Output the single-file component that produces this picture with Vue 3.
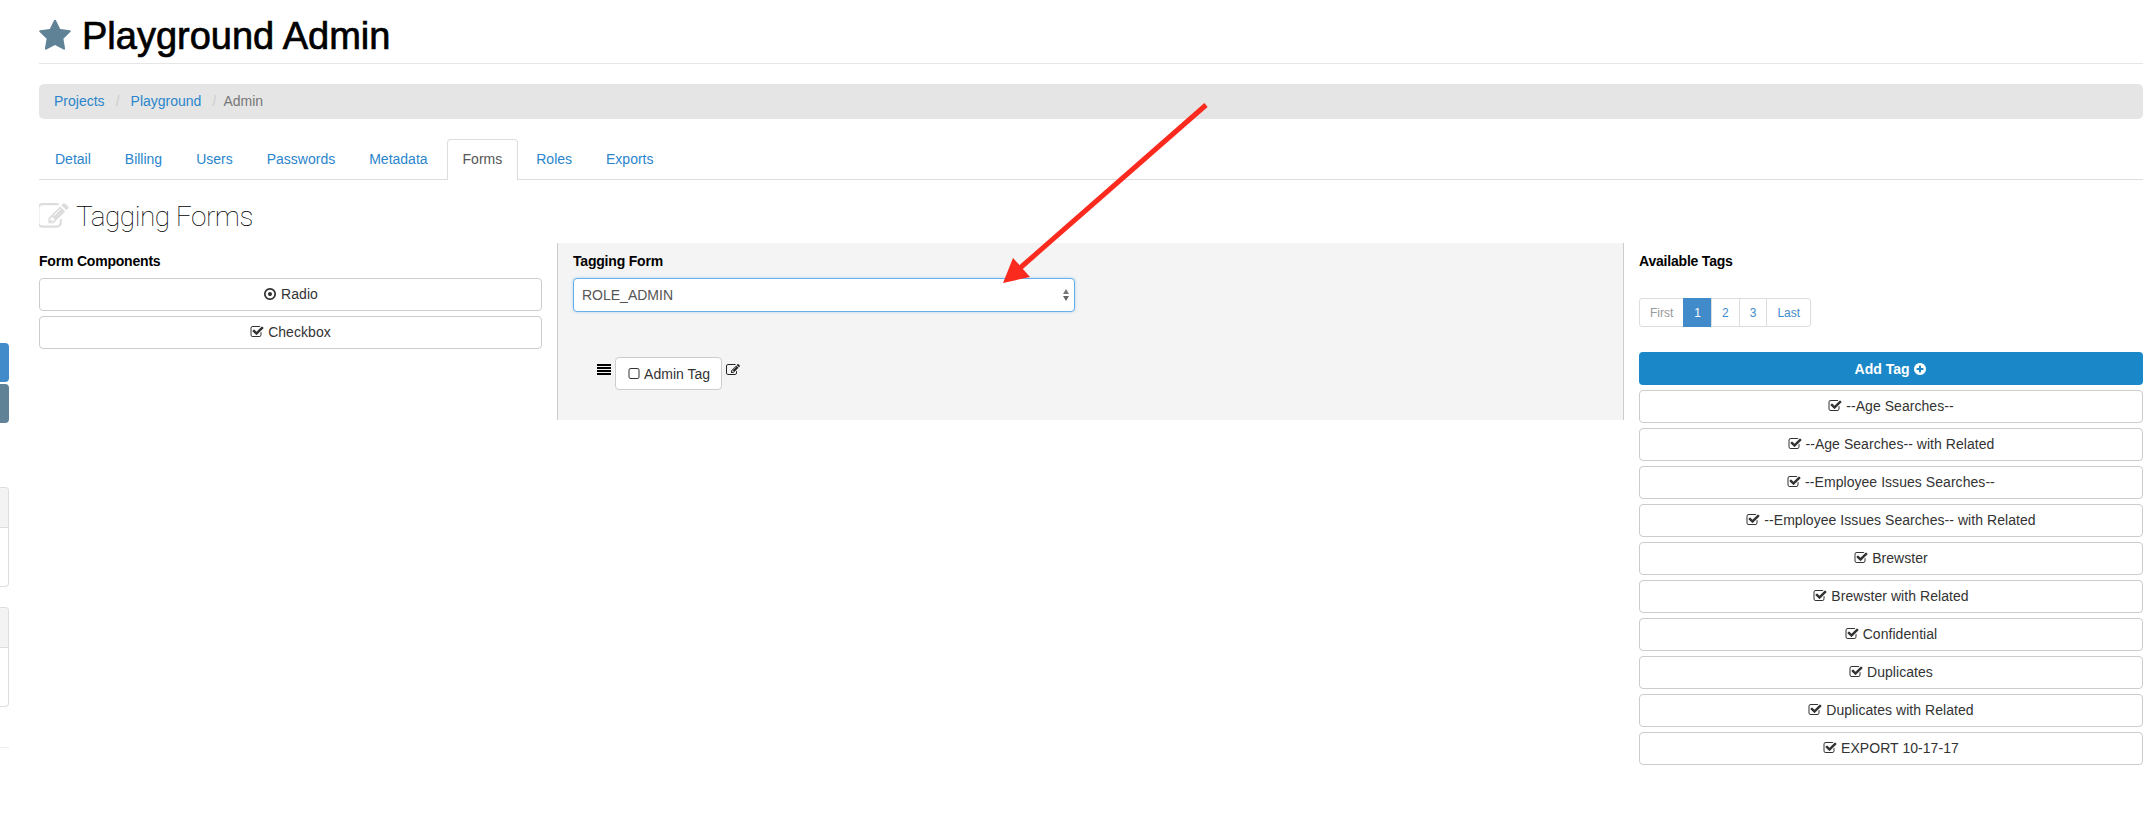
<script setup>
const icons = {
  check: 'M1472 930v318q0 119-84.5 203.5t-203.5 84.5h-832q-119 0-203.5-84.5t-84.5-203.5v-832q0-119 84.5-203.5t203.5-84.5h832q63 0 117 25 15 7 18 23 3 17-9 29l-49 49q-10 10-23 10-3 0-9-2-23-6-45-6h-832q-66 0-113 47t-47 113v832q0 66 47 113t113 47h832q66 0 113-47t47-113v-254q0-13 9-22l64-64q10-10 23-10 6 0 12 3 20 8 20 29zm231-489l-814 814q-24 24-57 24t-57-24l-430-430q-24-24-24-57t24-57l110-110q24-24 57-24t57 24l263 263 647-647q24-24 57-24t57 24l110 110q24 24 24 57t-24 57z',
  edit: 'M888 1184l116-116-152-152-116 116v56h96v96h56zm440-720q-16-16-33 1l-350 350q-17 17-1 33t33-1l350-350q17-17 1-33zm80 594v190q0 119-84.5 203.5t-203.5 84.5h-832q-119 0-203.5-84.5t-84.5-203.5v-832q0-119 84.5-203.5t203.5-84.5h832q63 0 117 25 15 7 18 23 3 16-9 28l-49 49q-14 14-32 8-23-6-45-6h-832q-66 0-113 47t-47 113v832q0 66 47 113t113 47h832q66 0 113-47t47-113v-126q0-13 9-22l64-64q15-15 35-7t20 29zm-96-738l288 288-672 672h-288v-288zm444 132l-92 92-288-288 92-92q28-28 68-28t68 28l152 152q28 28 28 68t-28 68z',
  dot: 'M1152 896q0 106-75 181t-181 75-181-75-75-181 75-181 181-75 181 75 75 181zm-256-544q-148 0-273 73t-198 198-73 273 73 273 198 198 273 73 273-73 198-198 73-273-73-273-198-198-273-73zm768 544q0 209-103 385.5t-279.5 279.5-385.5 103-385.5-103-279.5-279.5-103-385.5 103-385.5 279.5-279.5 385.5-103 385.5 103 279.5 279.5 103 385.5z',
  square: 'M1312 256h-832q-66 0-113 47t-47 113v832q0 66 47 113t113 47h832q66 0 113-47t47-113v-832q0-66-47-113t-113-47zm288 160v832q0 119-84.5 203.5t-203.5 84.5h-832q-119 0-203.5-84.5t-84.5-203.5v-832q0-119 84.5-203.5t203.5-84.5h832q119 0 203.5 84.5t84.5 203.5z',
  plus: 'M1344 960v-128q0-26-19-45t-45-19h-256v-256q0-26-19-45t-45-19h-128q-26 0-45 19t-19 45v256h-256q-26 0-45 19t-19 45v128q0 26 19 45t45 19h256v256q0 26 19 45t45 19h128q26 0 45-19t19-45v-256h256q26 0 45-19t19-45zm320-64q0 209-103 385.5t-279.5 279.5-385.5 103-385.5-103-279.5-279.5-103-385.5 103-385.5 279.5-279.5 385.5-103 385.5 103 279.5 279.5 103 385.5z',
  star: 'M1728 647q0 22-26 48l-363 354 86 500q1 7 1 20 0 21-10.5 35.5t-30.5 14.5q-19 0-40-12l-449-236-449 236q-22 12-40 12-21 0-31.5-14.5t-10.5-35.5q0-6 2-20l86-500-364-354q-25-27-25-48 0-37 56-46l502-73 225-455q19-41 49-41t49 41l225 455 502 73q56 9 56 46z'
}
const tabs = ['Detail', 'Billing', 'Users', 'Passwords', 'Metadata', 'Forms', 'Roles', 'Exports']
const tags = ['--Age Searches--', '--Age Searches-- with Related', '--Employee Issues Searches--', '--Employee Issues Searches-- with Related', 'Brewster', 'Brewster with Related', 'Confidential', 'Duplicates', 'Duplicates with Related', 'EXPORT 10-17-17']
</script>

<template>
  <div class="page">
    <aside class="edge">
      <div class="edge-btn blue"></div>
      <div class="edge-btn slate"></div>
      <div class="edge-panel"><div class="edge-head"></div></div>
      <div class="edge-panel second"><div class="edge-head"></div></div>
      <div class="edge-rule"></div>
    </aside>

    <main class="main">
      <h1 class="title">
        <svg class="star" viewBox="0 100 1792 1600"><path :d="icons.star" /></svg>
        <span>Playground Admin</span>
      </h1>

      <nav class="crumbs">
        <a>Projects</a><span class="sep">/</span><a>Playground</a><span class="sep">/</span><span class="here">Admin</span>
      </nav>

      <ul class="tabs">
        <li v-for="t in tabs" :key="t" :class="{ active: t === 'Forms' }">{{ t }}</li>
      </ul>

      <h2 class="heading">
        <svg class="heading-ic" viewBox="128 128 1664 1536"><path :d="icons.edit" /></svg>
        <span>Tagging Forms</span>
      </h2>

      <div class="columns">
        <section class="col-left">
          <h3 class="label">Form Components</h3>
          <div class="stack">
            <div class="item"><svg class="ic" viewBox="0 0 1792 1792"><path :d="icons.dot" /></svg> Radio</div>
            <div class="item"><svg class="ic" viewBox="0 0 1792 1792"><path :d="icons.check" /></svg> Checkbox</div>
          </div>
        </section>

        <section class="col-mid">
          <h3 class="label">Tagging Form</h3>
          <div class="select-wrap">
            <select class="select"><option>ROLE_ADMIN</option></select>
            <span class="arrows"><i class="up"></i><i class="down"></i></span>
          </div>
          <div class="tag-row">
            <span class="bars"><i></i><i></i><i></i><i></i></span>
            <div class="tag"><svg class="ic" viewBox="0 0 1792 1792"><path :d="icons.square" /></svg> Admin Tag</div>
            <svg class="ic tag-edit" viewBox="0 0 1792 1792"><path :d="icons.edit" /></svg>
          </div>
        </section>

        <section class="col-right">
          <h3 class="label">Available Tags</h3>
          <ul class="pager">
            <li class="off">First</li><li class="on">1</li><li>2</li><li>3</li><li>Last</li>
          </ul>
          <div class="add">Add Tag <svg class="ic" viewBox="0 0 1792 1792"><path :d="icons.plus" /></svg></div>
          <div class="stack">
            <div v-for="t in tags" :key="t" class="item"><svg class="ic" viewBox="0 0 1792 1792"><path :d="icons.check" /></svg> {{ t }}</div>
          </div>
        </section>
      </div>
    </main>

    <svg class="arrow" viewBox="0 0 2151 830" width="2151" height="830">
      <line x1="1206" y1="105" x2="1020" y2="268" stroke="#fb2a1e" stroke-width="5" />
      <polygon points="1003,283 1013,258 1030,277" fill="#fb2a1e" />
    </svg>
  </div>
</template>

<style>
html, body { margin: 0; background: #fff; overflow: hidden; }
</style>

<style scoped>
.page {
  position: relative;
  display: flex;
  width: 2151px;
  height: 830px;
  overflow: hidden;
  font-family: "Liberation Sans", Arial, sans-serif;
  font-size: 14px;
  line-height: 20px;
  color: #333;
}
.edge { width: 9px; padding-top: 343px; flex: none; }
.edge-btn { height: 39px; border-radius: 0 4px 4px 0; margin-bottom: 2px; }
.blue { background: #428bca; }
.slate { background: #5f8296; }
.edge-panel {
  margin-top: 64px;
  height: 100px;
  box-sizing: border-box;
  border: 1px solid #ddd;
  border-left: 0;
  border-radius: 0 4px 4px 0;
}
.edge-panel.second { margin-top: 20px; }
.edge-head { height: 39px; background: #f3f3f3; border-bottom: 1px solid #ddd; border-radius: 0 4px 0 0; }
.edge-rule { margin-top: 40px; height: 1px; background: #eee; }

.main { margin-left: 30px; width: 2104px; flex: none; }
.title {
  display: flex;
  align-items: center;
  gap: 10px;
  height: 64px;
  margin: 0;
  padding-top: 8px;
  box-sizing: border-box;
  border-bottom: 1px solid #e6e6e6;
  font-size: 38px;
  font-weight: 400;
  color: #000;
  -webkit-text-stroke: 0.7px #000;
}
.star { width: 34px; height: 32px; fill: #5f8296; margin-left: -1px; flex: none; }

.crumbs {
  display: flex;
  align-items: center;
  height: 35px;
  margin-top: 20px;
  padding: 0 0 2px 15px;
  box-sizing: border-box;
  background: #e5e5e5;
  border-radius: 5px;
}
.crumbs a { color: #2a85cc; }
.sep { color: #ccc; width: 16px; margin: 0 5px; text-align: center; }
.here { color: #777; margin-left: -4px; }

.tabs {
  display: flex;
  gap: 2px;
  list-style: none;
  height: 40px;
  margin: 20px 0 0;
  padding: 0;
  border-bottom: 1px solid #ddd;
}
.tabs li {
  height: 41px;
  padding: 9px 15px 0;
  box-sizing: border-box;
  border: 1px solid transparent;
  border-bottom: 0;
  color: #2a85cc;
}
.tabs li.active {
  margin-left: 1px;
  color: #555;
  background: #fff;
  border-color: #ddd;
  border-radius: 4px 4px 0 0;
}

.heading {
  display: flex;
  align-items: center;
  gap: 7px;
  height: 63px;
  margin: 0;
  padding-top: 10px;
  box-sizing: border-box;
  font-family: Roboto, "Liberation Sans", sans-serif;
  font-size: 28px;
  font-weight: 100;
  letter-spacing: -0.5px;
  color: #000;
}
.heading-ic { width: 30px; height: 27px; fill: #ddd; flex: none; }

.columns {
  display: grid;
  grid-template-columns: 518px 1067px 519px;
}
.label {
  margin: 0;
  font-size: 14px;
  line-height: 20px;
  font-weight: 700;
  letter-spacing: -0.2px;
  color: #000;
}
.col-left { padding: 8px 15px 0 0; }
.col-mid {
  box-sizing: border-box;
  height: 177px;
  padding: 8px 15px 0;
  background: #f4f4f4;
  border-left: 1px solid #ccc;
  border-right: 1px solid #ccc;
}
.col-right { padding: 8px 0 0 15px; }
.stack { display: flex; flex-direction: column; gap: 5px; margin-top: 7px; }
.item {
  display: flex;
  align-items: center;
  justify-content: center;
  height: 33px;
  padding-bottom: 1px;
  box-sizing: border-box;
  background: #fff;
  border: 1px solid #ccc;
  border-radius: 4px;
  white-space: pre;
  letter-spacing: 0.05px;
}
.ic { width: 14px; height: 14px; fill: #333; flex: none; }

.select-wrap { position: relative; width: 502px; margin-top: 7px; }
.select {
  display: block;
  width: 100%;
  height: 34px;
  padding: 0 8px;
  box-sizing: border-box;
  appearance: none;
  background: #fff;
  border: 1px solid #66afe9;
  border-radius: 4px;
  box-shadow: 0 0 3px rgba(102, 175, 233, 0.5);
  outline: 0;
  font: 14px "Liberation Sans", Arial, sans-serif;
  color: #555;
}
.arrows {
  position: absolute;
  top: 11px;
  right: 6px;
  display: flex;
  flex-direction: column;
  gap: 2px;
}
.arrows i { width: 0; height: 0; border-left: 3.5px solid transparent; border-right: 3.5px solid transparent; }
.up { border-bottom: 5px solid #777; }
.down { border-top: 5px solid #666; }

.tag-row { display: flex; align-items: flex-start; margin: 45px 0 0 24px; }
.bars {
  display: flex;
  flex-direction: column;
  gap: 1px;
  width: 14px;
  margin: 7px 4px 0 0;
}
.bars i { height: 2px; background: #000; }
.tag {
  display: flex;
  align-items: center;
  justify-content: center;
  width: 107px;
  height: 33px;
  box-sizing: border-box;
  background: #fff;
  border: 1px solid #ccc;
  border-radius: 4px;
  white-space: pre;
}
.tag-edit { margin: 6px 0 0 4px; fill: #222; }

.pager {
  display: flex;
  list-style: none;
  width: max-content;
  height: 29px;
  margin: 27px 0 0;
  padding: 0;
  font-size: 12px;
}
.pager li {
  display: flex;
  align-items: center;
  padding: 0 10px;
  background: #fff;
  border: 1px solid #ddd;
  margin-left: -1px;
  color: #428bca;
}
.pager li:first-child { margin-left: 0; border-radius: 3px 0 0 3px; }
.pager li:last-child { border-radius: 0 3px 3px 0; }
.pager .off { color: #999; }
.pager .on { background: #428bca; border-color: #428bca; color: #fff; }

.add {
  display: flex;
  align-items: center;
  justify-content: center;
  height: 33px;
  margin-top: 25px;
  background: #1a87c9;
  border-radius: 4px;
  color: #fff;
  font-weight: 700;
  white-space: pre;
}
.add .ic { fill: #fff; }
.col-right .stack { margin-top: 5px; }

.arrow { position: absolute; left: 0; top: 0; pointer-events: none; }
</style>
